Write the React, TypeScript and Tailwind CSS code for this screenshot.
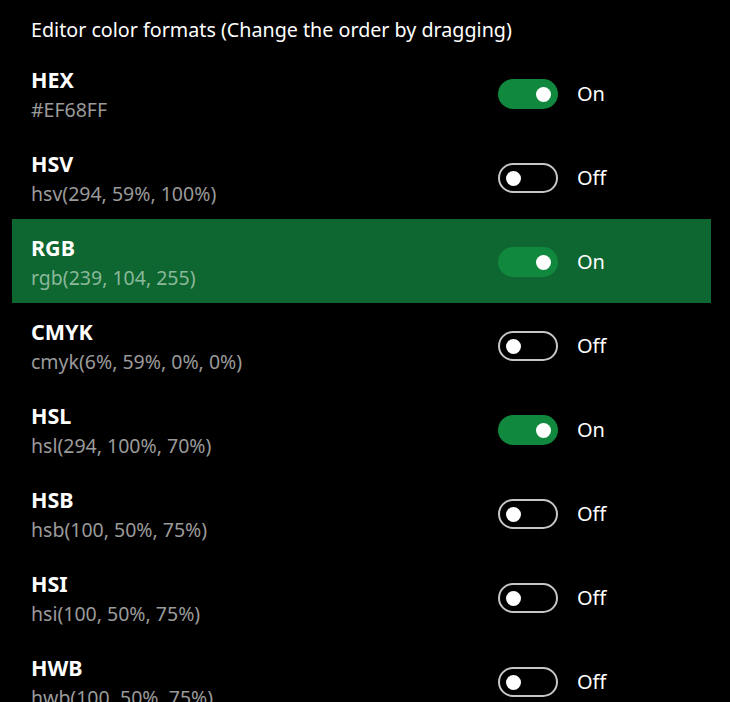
import React from "react";

interface FormatRow {
    name: string;
    value: string;
    on: boolean;
    selected?: boolean;
}

const rows: FormatRow[] = [
    {name: "HEX", value: "#EF68FF", on: true},
    {name: "HSV", value: "hsv(294, 59%, 100%)", on: false},
    {name: "RGB", value: "rgb(239, 104, 255)", on: true, selected: true},
    {name: "CMYK", value: "cmyk(6%, 59%, 0%, 0%)", on: false},
    {name: "HSL", value: "hsl(294, 100%, 70%)", on: true},
    {name: "HSB", value: "hsb(100, 50%, 75%)", on: false},
    {name: "HSI", value: "hsi(100, 50%, 75%)", on: false},
    {name: "HWB", value: "hwb(100, 50%, 75%)", on: false}
];

const Toggle = function ({on}: {on: boolean}) {
    if (on) {
        return (
            <div className="w-[60px] h-[30px] rounded-full bg-[#10893e] flex items-center justify-end pr-[7px]">
                <div className="w-[15px] h-[15px] rounded-full bg-white" />
            </div>
        );
    }
    return (
        <div className="w-[60px] h-[30px] rounded-full border-2 border-[#c6c6c6] flex items-center pl-[6px]">
            <div className="w-[15px] h-[15px] rounded-full bg-white" />
        </div>
    );
};

export default function App() {
    return (
        <div
            className="w-[730px] h-[702px] overflow-hidden bg-black text-white"
            style={{fontFamily: '"Noto Sans", "Open Sans", sans-serif'}}
        >
            <div className="pl-[12px] pr-[19px]">
                <h2 className="pl-[19px] pt-[16px] h-[51px] text-[19.7px] leading-[28px]">
                    Editor color formats (Change the order by dragging)
                </h2>
                <ul>
                    {rows.map((row) => (
                        <li
                            key={row.name}
                            className={
                                "h-[84px] pl-[19px] flex flex-row items-start " +
                                (row.selected ? "bg-[#0e6630]" : "")
                            }
                        >
                            <div className="w-[467px] pt-[14px]">
                                <div className="text-[21.5px] font-bold leading-[30px]">{row.name}</div>
                                <div
                                    className={
                                        "text-[19.5px] leading-[30px] " +
                                        (row.selected ? "text-[#8ab89a]" : "text-[#9a9a9a]")
                                    }
                                >
                                    {row.value}
                                </div>
                            </div>
                            <div className="pt-[27px] flex flex-row items-center">
                                <Toggle on={row.on} />
                                <span className="ml-[19px] text-[20px] leading-[32px]">{row.on ? "On" : "Off"}</span>
                            </div>
                        </li>
                    ))}
                </ul>
            </div>
        </div>
    );
}
